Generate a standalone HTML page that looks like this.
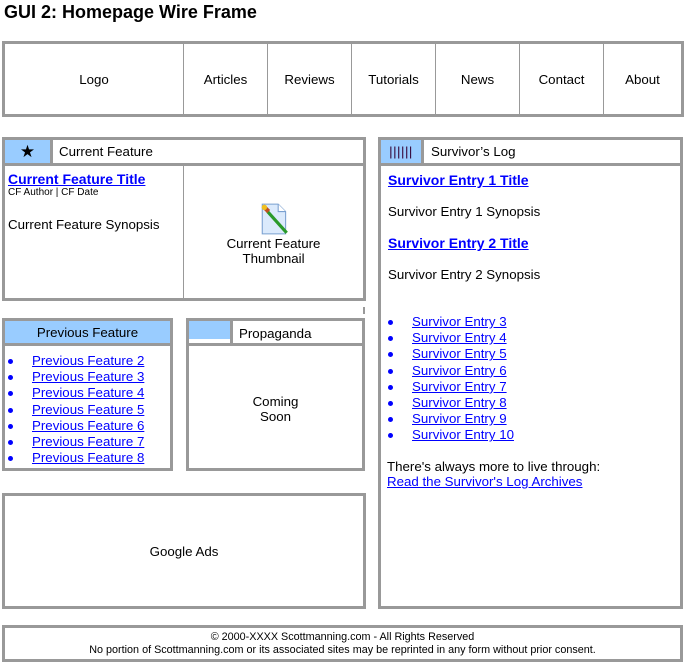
<!DOCTYPE html>
<html><head><style>
*{margin:0;padding:0;box-sizing:border-box}
body{width:686px;height:667px;background:#fff;font-family:"Liberation Sans",Arial,sans-serif;font-size:13.3px;color:#000;position:relative;overflow:hidden}
.a{position:absolute}
.b{position:absolute;border:3px solid #999;background:#fff}
.c{display:flex;align-items:center;justify-content:center;text-align:center}
a{color:#00f;text-decoration:underline}
ul{list-style:none}
li{position:relative;padding-left:27px;line-height:16.2px}
li:before{content:"";position:absolute;left:3px;top:6px;width:5px;height:5px;border-radius:50%;background:#00f}
</style></head><body>
<div class="a" style="left:4px;top:2px;font-size:18px;font-weight:bold">GUI 2: Homepage Wire Frame</div>

<div class="b" style="left:2px;top:41px;width:682px;height:76px;display:flex">
<div class="c" style="width:179px;border-right:1px solid #999">Logo</div>
<div class="c" style="width:84px;border-right:1px solid #999">Articles</div>
<div class="c" style="width:84px;border-right:1px solid #999">Reviews</div>
<div class="c" style="width:84px;border-right:1px solid #999">Tutorials</div>
<div class="c" style="width:84px;border-right:1px solid #999">News</div>
<div class="c" style="width:84px;border-right:1px solid #999">Contact</div>
<div class="c" style="flex:1">About</div>
</div>

<div class="b" style="left:2px;top:137px;width:364px;height:164px">
<div class="a c" style="left:0;top:0;width:45px;height:23px;background:#99ccff;font-size:17px">★</div>
<div class="a" style="left:45px;top:0;width:3px;height:23px;background:#999"></div>
<div class="a" style="left:54px;top:4px">Current Feature</div>
<div class="a" style="left:0;top:23px;width:358px;height:3px;background:#999"></div>
<div class="a" style="left:178px;top:26px;width:1px;height:132px;background:#999"></div>
<div class="a" style="left:3px;top:31px;font-size:14px;font-weight:bold"><a href="#">Current Feature Title</a></div>
<div class="a" style="left:3px;top:47px;font-size:10px">CF Author | CF Date</div>
<div class="a" style="left:3px;top:77px">Current Feature Synopsis</div>
<svg class="a" style="left:253px;top:62px" width="34" height="34" viewBox="0 0 32 32"><path d="M4 2h15l7 7v21H4z" fill="#dbeafc" stroke="#7aa0d0"/><path d="M19 2v7h7" fill="#fff" stroke="#7aa0d0"/><path d="M9 9l18 20" stroke="#2a9a2a" stroke-width="3"/><path d="M5 4l5 5" stroke="#c05020" stroke-width="4"/><circle cx="6" cy="5" r="2.5" fill="#f0c020"/></svg>
<div class="a" style="left:179px;top:96px;width:179px;text-align:center;line-height:15px">Current Feature<br>Thumbnail</div>
</div>
<div class="a" style="left:363px;top:307px;width:2px;height:7px;background:#999"></div>

<div class="b" style="left:2px;top:318px;width:171px;height:153px">
<div class="a c" style="left:0;top:0;width:165px;height:22px;background:#99ccff">Previous Feature</div>
<div class="a" style="left:0;top:22px;width:165px;height:3px;background:#999"></div>
<ul class="a" style="left:0;top:32px;width:165px">
<li><a href="#">Previous Feature 2</a></li><li><a href="#">Previous Feature 3</a></li><li><a href="#">Previous Feature 4</a></li><li><a href="#">Previous Feature 5</a></li><li><a href="#">Previous Feature 6</a></li><li><a href="#">Previous Feature 7</a></li><li><a href="#">Previous Feature 8</a></li>
</ul></div>

<div class="b" style="left:186px;top:318px;width:179px;height:153px">
<div class="a" style="left:0;top:0;width:41px;height:18px;background:#99ccff"></div>
<div class="a" style="left:41px;top:0;width:3px;height:22px;background:#999"></div>
<div class="a" style="left:50px;top:5px">Propaganda</div>
<div class="a" style="left:0;top:22px;width:173px;height:3px;background:#999"></div>
<div class="a" style="left:0;top:73px;width:173px;text-align:center;line-height:15px">Coming<br>Soon</div>
</div>

<div class="b c" style="left:2px;top:493px;width:364px;height:116px">Google Ads</div>

<div class="b" style="left:378px;top:137px;width:305px;height:472px">
<div class="a c" style="left:0;top:0;width:40px;height:23px;background:#99ccff;color:#303;letter-spacing:0.5px">||||||</div>
<div class="a" style="left:40px;top:0;width:3px;height:23px;background:#999"></div>
<div class="a" style="left:50px;top:4px">Survivor’s Log</div>
<div class="a" style="left:0;top:23px;width:299px;height:3px;background:#999"></div>
<div class="a" style="left:7px;top:32px;font-size:14px;font-weight:bold"><a href="#">Survivor Entry 1 Title</a></div>
<div class="a" style="left:7px;top:64px">Survivor Entry 1 Synopsis</div>
<div class="a" style="left:7px;top:95px;font-size:14px;font-weight:bold"><a href="#">Survivor Entry 2 Title</a></div>
<div class="a" style="left:7px;top:127px">Survivor Entry 2 Synopsis</div>
<ul class="a" style="left:4px;top:174px">
<li><a href="#">Survivor Entry 3</a></li><li><a href="#">Survivor Entry 4</a></li><li><a href="#">Survivor Entry 5</a></li><li><a href="#">Survivor Entry 6</a></li><li><a href="#">Survivor Entry 7</a></li><li><a href="#">Survivor Entry 8</a></li><li><a href="#">Survivor Entry 9</a></li><li><a href="#">Survivor Entry 10</a></li>
</ul>
<div class="a" style="left:6px;top:319px;line-height:15px">There's always more to live through:<br><a href="#">Read the Survivor's Log Archives</a></div>
</div>

<div class="b" style="left:2px;top:625px;width:681px;height:37px;text-align:center;font-size:10.8px;line-height:12.5px;padding-top:3px">© 2000-XXXX Scottmanning.com - All Rights Reserved<br>No portion of Scottmanning.com or its associated sites may be reprinted in any form without prior consent.</div>
</body></html>
